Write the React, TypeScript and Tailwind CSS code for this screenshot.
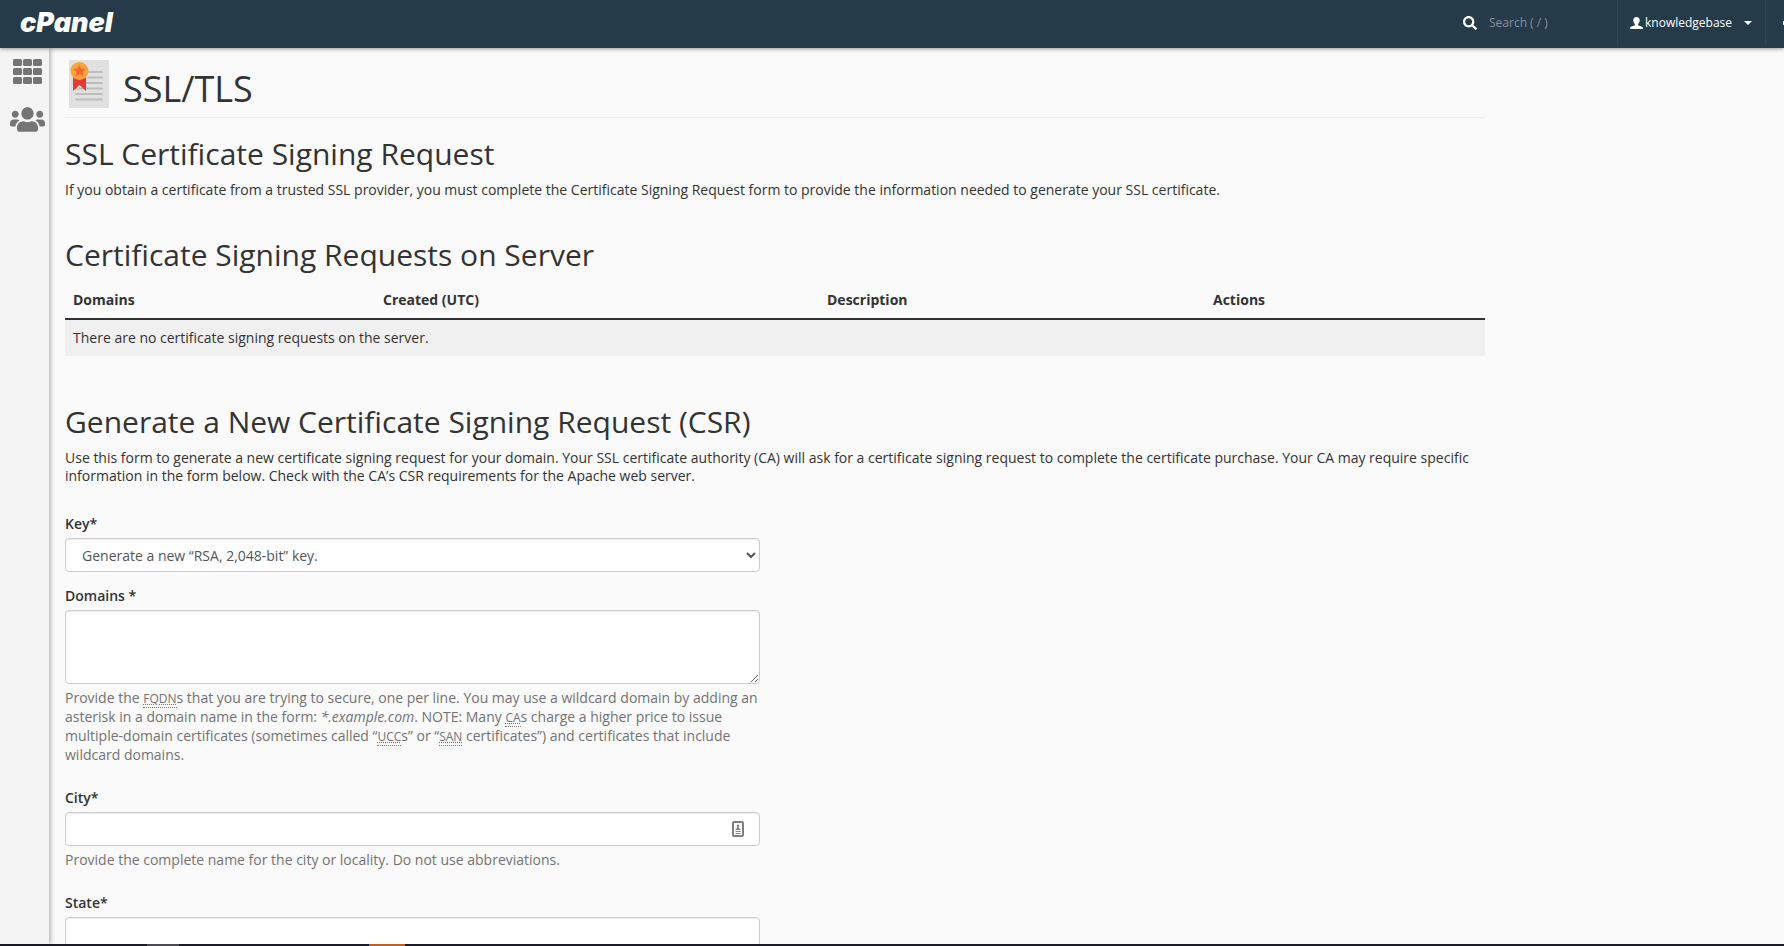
import { ReactNode } from "react";
import { FaSearch, FaUsers } from "react-icons/fa";

const control =
  "block w-full rounded border border-[#ccc] bg-white text-sm text-[#555] shadow-[inset_0_1px_1px_rgba(0,0,0,0.075)] outline-none";

function Abbr({ title, children }: { title: string; children: ReactNode }) {
  return (
    <abbr title={title} className="cursor-help border-b border-dotted border-[#777] text-xs">
      {children}
    </abbr>
  );
}

function Label({ htmlFor, children }: { htmlFor: string; children: ReactNode }) {
  return (
    <label htmlFor={htmlFor} className="mb-1 block leading-5 font-semibold text-[#333]">
      {children}
    </label>
  );
}

function UserIcon() {
  return (
    <svg viewBox="0 0 12 12" className="h-3 w-[13px]" preserveAspectRatio="none" fill="currentColor" aria-hidden="true">
      <path d="M6 0C4.100 0 3 1.300 3 3.300c0 1.500.500 2.900 1.500 3.700v1.300C3.600 8.800 1.500 9.300.600 10 .1 10.400 0 11 0 12h12c0-1-.1-1.600-.6-2C10.500 9.300 8.400 8.800 7.500 8.300V7C8.500 6.200 9 4.800 9 3.300 9 1.300 7.900 0 6 0z" />
    </svg>
  );
}

function GridIcon() {
  return (
    <svg viewBox="0 0 29 25" className="h-[25px] w-[29px]" fill="#757575" aria-hidden="true">
      {[0, 9, 18].map((y) =>
        [0, 10, 20].map((x) => <rect key={`${x}-${y}`} x={x} y={y} width="9" height="7" rx="1.500" />)
      )}
    </svg>
  );
}

function CertificateIcon() {
  return (
    <svg viewBox="0 0 40 48" className="h-12 w-10 shrink-0" aria-hidden="true">
      <rect width="40" height="48" rx="1.500" fill="#e0e0e0" />
      <g fill="#bdbdbd">
        <rect x="18" y="11" width="16" height="2" rx="1" />
        <rect x="18" y="16.500" width="16" height="2" rx="1" />
        <rect x="6" y="22" width="28" height="2" rx="1" />
        <rect x="6" y="27.500" width="28" height="2" rx="1" />
        <rect x="6" y="33" width="28" height="2" rx="1" />
        <rect x="6" y="38.500" width="28" height="2" rx="1" />
      </g>
      <path d="M4 17h13v14l-6.500-6L4 31z" fill="#e53935" />
      <circle cx="10.500" cy="11" r="9" fill="#f9a33a" />
      <path
        d="M10.500 4.500l1.700 4.300 4.600.3-3.600 2.900 1.200 4.500-3.900-2.500-3.900 2.500 1.200-4.500-3.600-2.900 4.600-.3z"
        fill="#ff6434"
      />
    </svg>
  );
}

function ContactIcon() {
  return (
    <svg viewBox="0 0 12 16" className="h-4 w-3" aria-hidden="true">
      <rect x="1" y="1" width="10" height="14" rx="1" fill="#fff" stroke="#808080" strokeWidth="2" />
      <path d="M6 3.500a1.300 1.300 0 0 1 .8 2.300v1.400L8.500 8v1h-5V8l1.700-.8V5.800A1.300 1.300 0 0 1 6 3.500z" fill="#808080" />
      <path d="M3.500 10.500h5M3.500 12.500h5" stroke="#808080" />
    </svg>
  );
}

function Header() {
  return (
    <header className="relative z-20 flex h-12 shrink-0 items-stretch bg-[#253b4a] pb-0.5 text-white shadow-[0_1px_4px_rgba(0,0,0,0.4)]">
      <a href="#home" className="flex items-center pl-5 font-['Inter'] text-[27px] leading-6 font-black italic">
        cPanel
      </a>
      <div className="ml-auto flex w-[154px] items-center gap-3">
        <FaSearch size={14} />
        <input
          aria-label="Search"
          placeholder="Search ( / )"
          className="w-28 min-w-0 bg-transparent text-xs outline-none placeholder:text-[#8b9096]"
        />
      </div>
      <button type="button" className="flex w-[148px] items-center border-l border-[#2e4553] pl-3 text-xs">
        <UserIcon />
        <span className="ml-0.5">knowledgebase</span>
        <span className="ml-3 border-x-4 border-t-4 border-x-transparent border-t-white" />
      </button>
      <button
        type="button"
        aria-label="Notifications"
        className="flex w-[19px] items-center justify-end overflow-hidden border-l border-[#2e4553]"
      >
        <span className="h-1 w-px bg-white" />
      </button>
    </header>
  );
}

function Sidebar() {
  return (
    <nav className="relative z-10 flex w-[49px] shrink-0 flex-col items-end bg-[#f4f4f4] shadow-[1px_0_5px_rgba(0,0,0,0.35)]">
      <a href="#tools" aria-label="Tools" className="mt-[11px] mr-[7px]">
        <GridIcon />
      </a>
      <a href="#users" aria-label="User Manager" className="mt-[18px] mr-1 text-[#757575]">
        <FaUsers size={35} />
      </a>
    </nav>
  );
}

function RequestsTable() {
  return (
    <table className="mt-[7px] w-full text-left">
      <thead className="border-b-2 border-[#333]">
        <tr className="font-bold">
          <th className="w-[310px] p-2 leading-5">Domains</th>
          <th className="w-[444px] p-2 leading-5">Created (UTC)</th>
          <th className="w-[386px] p-2 leading-5">Description</th>
          <th className="p-2 leading-5">Actions</th>
        </tr>
      </thead>
      <tbody>
        <tr className="bg-[#f0f0f0]">
          <td colSpan={4} className="p-2 leading-5">
            There are no certificate signing requests on the server.
          </td>
        </tr>
      </tbody>
    </table>
  );
}

function CsrForm() {
  return (
    <form className="w-[49%] max-w-[695px] text-sm text-[#737373]">
      <div className="mb-[14px]">
        <Label htmlFor="key">Key*</Label>
        <select id="key" className={`${control} h-[34px] px-3`}>
          <option>Generate a new “RSA, 2,048-bit” key.</option>
        </select>
      </div>
      <div className="mb-6">
        <Label htmlFor="domains">Domains *</Label>
        <textarea id="domains" className={`${control} h-[74px] px-3 py-2`} />
        <p className="mt-1 leading-[19px]">
          Provide the <Abbr title="Fully Qualified Domain Name">FQDN</Abbr>s that you are trying to secure, one per
          line. You may use a wildcard domain by adding an asterisk in a domain name in the form:{" "}
          <em>*.example.com</em>. NOTE: Many <Abbr title="Certificate Authority">CA</Abbr>s charge a higher price to
          issue multiple-domain certificates (sometimes called “
          <Abbr title="Unified Communications Certificate">UCC</Abbr>s” or “
          <Abbr title="Subject Alternative Name">SAN</Abbr> certificates”) and certificates that include wildcard
          domains.
        </p>
      </div>
      <div className="mb-6">
        <Label htmlFor="city">City*</Label>
        <div className="relative">
          <input id="city" className={`${control} h-[34px] px-3`} />
          <span className="absolute inset-y-0 right-4 flex items-center">
            <ContactIcon />
          </span>
        </div>
        <p className="mt-1 leading-[19px]">
          Provide the complete name for the city or locality. Do not use abbreviations.
        </p>
      </div>
      <div className="mb-6">
        <Label htmlFor="state">State*</Label>
        <input id="state" className={`${control} h-[34px] px-3`} />
      </div>
    </form>
  );
}

export default function App() {
  return (
    <div className="flex h-screen flex-col overflow-hidden bg-[#fafafa] font-['Open_Sans',sans-serif] text-sm text-[#333]">
      <Header />
      <div className="flex min-h-0 flex-1">
        <Sidebar />
        <main className="min-w-0 flex-1 overflow-hidden px-4">
          <div className="max-w-[1420px]">
            <div className="flex h-[70px] gap-[14px] border-b border-[#eee] pt-3 pl-1">
              <CertificateIcon />
              <h1 className="pt-[9px] text-4xl">SSL/TLS</h1>
            </div>
            <h2 className="mt-4 text-3xl leading-10">SSL Certificate Signing Request</h2>
            <p className="mt-[7px] leading-[18px]">
              If you obtain a certificate from a trusted SSL provider, you must complete the Certificate Signing
              Request form to provide the information needed to generate your SSL certificate.
            </p>
            <h2 className="mt-9 text-3xl leading-10">Certificate Signing Requests on Server</h2>
            <RequestsTable />
            <h2 className="mt-[46px] text-3xl leading-10">Generate a New Certificate Signing Request (CSR)</h2>
            <p className="mt-[7px] mb-[29px] leading-[18px]">
              Use this form to generate a new certificate signing request for your domain. Your SSL certificate
              authority (CA) will ask for a certificate signing request to complete the certificate purchase. Your CA
              may require specific information in the form below. Check with the CA’s CSR requirements for the Apache
              web server.
            </p>
            <CsrForm />
          </div>
        </main>
      </div>
      <footer className="flex h-0.5 shrink-0 bg-[#1c1c26]">
        <span className="ml-[147px] w-8 bg-[#4a4a50]" />
        <span className="ml-[190px] w-9 bg-[#b8622a]" />
      </footer>
    </div>
  );
}
